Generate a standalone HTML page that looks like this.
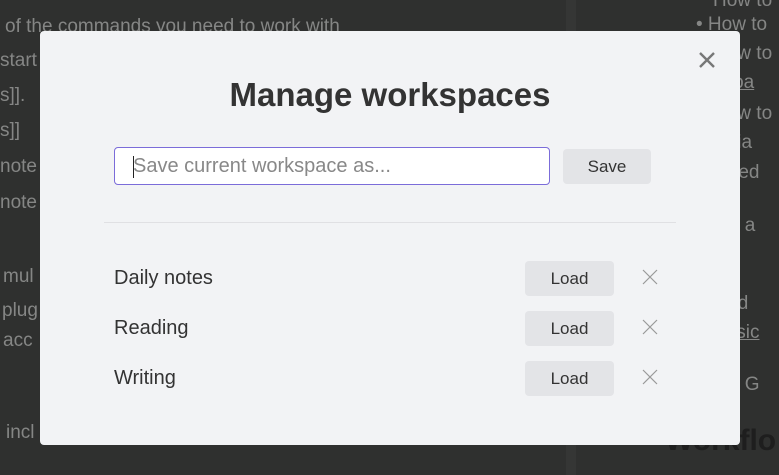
<!DOCTYPE html>
<html><head><style>
body{margin:0;width:779px;height:475px;overflow:hidden;background:#2f302f;font-family:"Liberation Sans",sans-serif;position:relative}
.bg{position:absolute;color:#858685;font-size:19px;white-space:nowrap}
.u{text-decoration:underline}
.div{position:absolute;left:566px;top:0;width:10px;height:475px;background:#353635}
.modal{position:absolute;left:40px;top:31px;width:700px;height:414px;background:#f2f3f5;border-radius:4px}
h1{position:absolute;left:0;width:100%;top:45px;margin:0;text-align:center;font-size:33px;font-weight:bold;color:#333}
.inp{position:absolute;left:74px;top:116px;width:436px;height:38px;border:1px solid #7b6cd9;border-radius:4px;background:#fff;box-sizing:border-box;font-size:20px;color:#888;padding:7px 0 0 18px}
.inp:before{content:"";position:absolute;left:18px;top:8px;width:1px;height:22px;background:#222}
.btn{position:absolute;background:#e3e4e7;border-radius:4px;color:#333;font-size:17px;text-align:center}
.hr{position:absolute;left:64px;top:191px;width:572px;height:1px;background:#e0e0e3}
.row{position:absolute;left:74px;font-size:20px;color:#333}
.x{position:absolute;left:602px;width:16px;height:16px}
</style></head><body>
<div class="bg" style="left:5px;top:16px">of the commands you need to work with</div>
<div class="bg" style="left:0;top:50px">start</div>
<div class="bg" style="left:0;top:85px">s]].</div>
<div class="bg" style="left:0;top:120px">s]]</div>
<div class="bg" style="left:0;top:156px">note</div>
<div class="bg" style="left:0;top:192px">note</div>
<div class="bg" style="left:3px;top:266px">mul</div>
<div class="bg" style="left:2px;top:300px">plug</div>
<div class="bg" style="left:3px;top:330px">acc</div>
<div class="bg" style="left:6px;top:422px">incl</div>
<div class="div"></div>
<div class="bg" style="left:713px;top:-10px">How to</div>
<div class="bg" style="left:696px;top:14px">• How to</div>
<div class="bg" style="left:713px;top:43px">How to</div>
<div class="bg u" style="left:713px;top:72px">yboa</div>
<div class="bg" style="left:713px;top:103px">How to</div>
<div class="bg" style="left:713px;top:132px">sidia</div>
<div class="bg" style="left:713px;top:162px">abled</div>
<div class="bg" style="left:713px;top:215px">ant a</div>
<div class="bg u" style="left:713px;top:240px">n.</div>
<div class="bg" style="left:713px;top:293px">ou'd</div>
<div class="bg u" style="left:713px;top:322px">Basic</div>
<div class="bg" style="left:713px;top:374px">e a G</div>
<div class="bg" style="left:665px;top:424px;font-size:30px;font-weight:bold;color:#1e1e1e">Workflo</div>
<div class="modal">
<svg style="position:absolute;left:659px;top:21px" width="16" height="16"><path d="M1 1L15 15M15 1L1 15" stroke="#777" stroke-width="2.4"/></svg>
<h1>Manage workspaces</h1>
<div class="inp">Save current workspace as...</div>
<div class="btn" style="left:523px;top:118px;width:88px;height:35px;line-height:35px">Save</div>
<div class="hr"></div>
<div class="row" style="top:236px">Daily notes</div>
<div class="row" style="top:286px">Reading</div>
<div class="row" style="top:336px">Writing</div>
<div class="btn" style="left:485px;top:230px;width:89px;height:35px;line-height:35px">Load</div>
<div class="btn" style="left:485px;top:280px;width:89px;height:35px;line-height:35px">Load</div>
<div class="btn" style="left:485px;top:330px;width:89px;height:35px;line-height:35px">Load</div>
<svg class="x" style="top:238px"><path d="M1 1L15 15M15 1L1 15" stroke="#999" stroke-width="1.2"/></svg>
<svg class="x" style="top:288px"><path d="M1 1L15 15M15 1L1 15" stroke="#999" stroke-width="1.2"/></svg>
<svg class="x" style="top:338px"><path d="M1 1L15 15M15 1L1 15" stroke="#999" stroke-width="1.2"/></svg>
</div>
</body></html>
